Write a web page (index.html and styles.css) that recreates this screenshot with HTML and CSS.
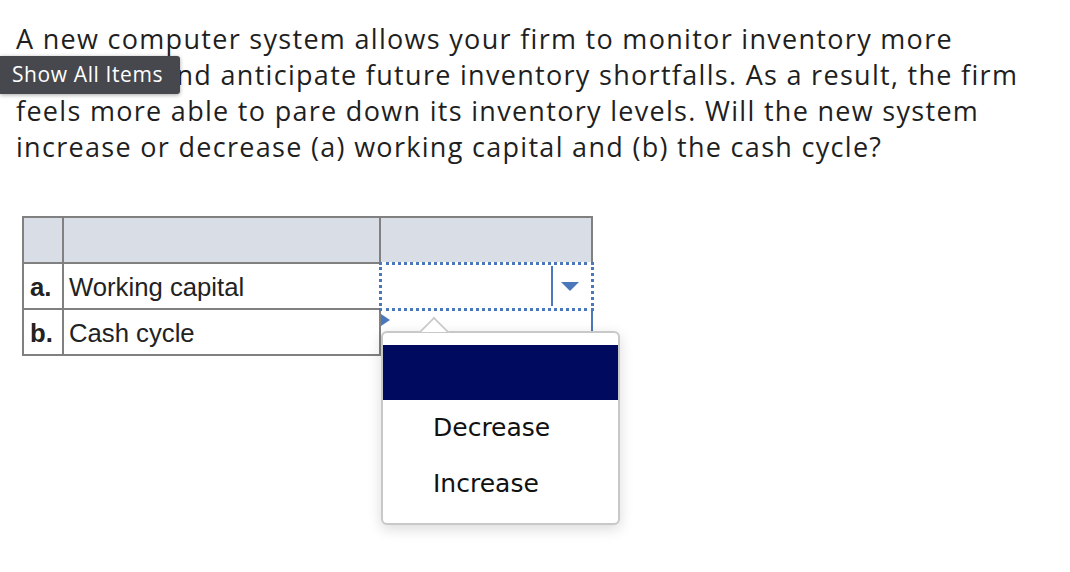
FILE: index.html
```html
<!DOCTYPE html>
<html lang="en">
<head>
  <meta charset="UTF-8">
  <title>Working capital question</title>
  <link rel="stylesheet" href="styles.css">
</head>
<body>
  <div class="question">
    <p class="prompt">A new computer system allows your firm to monitor inventory more efficiently and anticipate future inventory shortfalls. As a result, the firm feels more able to pare down its inventory levels. Will the new system increase or decrease (a) working capital and (b) the cash cycle?</p>
    <div class="show-all">Show All Items</div>

    <table class="answer-table">
      <tr class="head-row">
        <th class="col-key"></th>
        <th class="col-label"></th>
        <th class="col-answer"></th>
      </tr>
      <tr>
        <td class="col-key">a.</td>
        <td class="col-label">Working capital</td>
        <td class="col-answer cell-focus">
          <div class="picker">
            <span class="picker-value"></span>
            <span class="picker-arrow"></span>
          </div>
        </td>
      </tr>
      <tr>
        <td class="col-key">b.</td>
        <td class="col-label">Cash cycle</td>
        <td class="col-answer cell-open"><span class="marker"></span></td>
      </tr>
    </table>

    <div class="dropdown">
      <span class="caret"></span>
      <div class="option selected"></div>
      <div class="option">Decrease</div>
      <div class="option">Increase</div>
    </div>
  </div>
</body>
</html>
```

FILE: styles.css
```css
/* Reset */
* {
  box-sizing: border-box;
  margin: 0;
  padding: 0;
}
body {
  font-family: "Open Sans", Lato, sans-serif;
  background-color: #fff;
  color: #222;
}
.question {
  position: relative;
  min-height: 560px;
  padding: 21px 0 0 16px;
}
/* Question text */
.prompt {
  font-size: 27px;
  line-height: 36px;
  letter-spacing: 1.3px;
  width: 1010px;
  color: #1f1f1f;
}
/* Tooltip over the text */
.show-all {
  position: absolute;
  left: 0;
  top: 56px;
  width: 180px;
  height: 38px;
  padding-left: 12px;
  background-color: #46484e;
  color: #fff;
  font-size: 21px;
  letter-spacing: 0.6px;
  line-height: 36px;
  white-space: nowrap;
  border-radius: 0 3px 3px 0;
  box-shadow: 0 1px 4px rgba(0, 0, 0, 0.35);
}
/* Table */
.answer-table {
  margin: 51px 0 0 6px;
  border-collapse: collapse;
  font-family: "Liberation Sans", Arial, sans-serif;
  font-size: 25.7px;
  color: #222;
}
.answer-table th,
.answer-table td {
  border: 2px solid #808080;
  height: 46px;
  padding: 2px 0 0;
  text-align: left;
}
.head-row th {
  background-color: #d9dde6;
}
.col-key {
  width: 40px;
  padding-left: 6px !important;
  font-weight: bold;
}
.col-label {
  width: 317px;
  padding-left: 5px !important;
}
.col-answer {
  width: 212px;
  position: relative;
}
.cell-focus {
  border: 3px dotted #4a78bb !important;
  padding: 0 !important;
}
.picker {
  display: flex;
  height: 40px;
}
.picker-value {
  flex: 1;
  border-right: 2px solid #4a78bb;
}
.picker-arrow {
  width: 38px;
  display: flex;
  align-items: center;
  justify-content: center;
  padding-right: 4px;
}
.picker-arrow::after {
  content: "";
  border-left: 9px solid transparent;
  border-right: 9px solid transparent;
  border-top: 9px solid #4a78bb;
}
.cell-open {
  border-top: 2px solid #4a78bb !important;
  border-right: 2px solid #4a78bb !important;
  border-bottom: none !important;
}
.marker {
  position: absolute;
  left: 0;
  top: 3px;
  border-top: 6px solid transparent;
  border-bottom: 6px solid transparent;
  border-left: 9px solid #4a78bb;
}
/* Dropdown list */
.dropdown {
  position: absolute;
  left: 381px;
  top: 331px;
  width: 239px;
  height: 194px;
  padding-top: 12px;
  background-color: #fff;
  border: 2px solid #c8c8c8;
  border-radius: 6px;
  box-shadow: 0 4px 14px rgba(0, 0, 0, 0.15);
  font-family: "DejaVu Sans", Verdana, sans-serif;
  font-size: 25px;
  color: #111;
}
.caret {
  position: absolute;
  left: 40px;
  top: -12px;
  width: 22px;
  height: 22px;
  background-color: #fff;
  border-left: 2px solid #c8c8c8;
  border-top: 2px solid #c8c8c8;
  transform: rotate(45deg);
  clip-path: polygon(0 0, 100% 0, 0 100%);
}
.option {
  height: 56px;
  line-height: 56px;
  padding-left: 50px;
}
.option.selected {
  background-color: #000a5e;
  height: 55px;
}
```
